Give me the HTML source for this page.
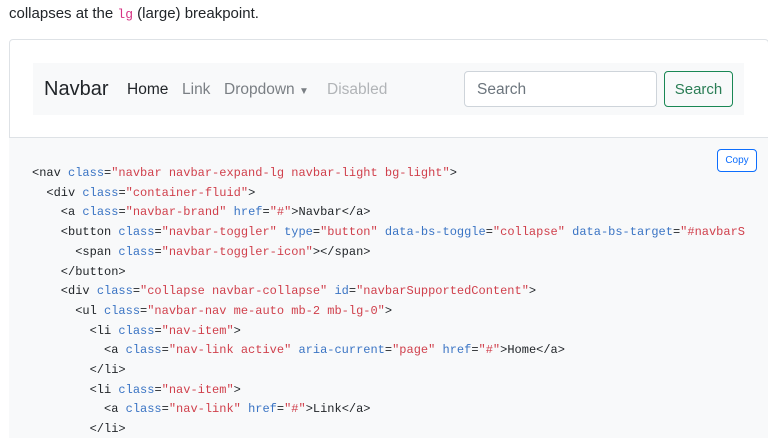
<!DOCTYPE html>
<html><head><style>
body{margin:0;width:768px;height:433px;overflow:hidden;background:#fff;font-family:"Liberation Sans",sans-serif;color:#212529}
.p{position:absolute;left:9px;top:5px;font-size:15px}
.p code{font-family:"Liberation Mono",monospace;color:#d63384;font-size:13px}
.ex{position:absolute;left:9px;top:39px;width:760px;height:99px;border:1px solid #dee2e6;border-radius:4px 4px 0 0;box-sizing:border-box}
.nb{position:absolute;left:23px;top:23px;width:711px;height:52px;background:#f8f9fa}
.brand{position:absolute;left:11px;top:15px;font-size:20px;color:#212529}
.nl{position:absolute;top:18px;font-size:15.5px;color:#7a7f84}
.in{position:absolute;left:431px;top:8px;width:193px;height:36px;border:1px solid #ced4da;border-radius:4px;background:#fff;box-sizing:border-box;font-size:15.5px;color:#6c757d;padding:9px 12px}
.bt{position:absolute;left:631px;top:8px;width:69px;height:36px;border:1px solid #198754;border-radius:4px;box-sizing:border-box;font-size:15px;color:#2a7d55;padding:9px 0;text-align:center}
.code{position:absolute;left:9px;top:138px;width:760px;height:300px;background:#f8f9fa}
pre{position:absolute;left:23px;top:26px;margin:0;font-family:"Liberation Mono",monospace;font-size:12px;line-height:19.7px;color:#212529;white-space:pre}
.a{color:#3a74c4}.s{color:#d0404c}
.cp{position:absolute;left:708px;top:11px;width:40px;height:23px;border:1px solid #0d6efd;border-radius:4px;box-sizing:border-box;font-size:10px;color:#0d6efd;text-align:center;line-height:21px;background:#fff}
</style></head><body>
<div class="p">collapses at the <code>lg</code> (large) breakpoint.</div>
<div class="ex"><div class="nb">
<div class="brand">Navbar</div>
<div class="nl" style="left:94px;color:#212529">Home</div>
<div class="nl" style="left:149px">Link</div>
<div class="nl" style="left:191px">Dropdown <span style="font-size:10px">&#9660;</span></div>
<div class="nl" style="left:294px;color:#b1b4b7">Disabled</div>
<div class="in">Search</div>
<div class="bt">Search</div>
</div></div>
<div class="code"><div class="cp">Copy</div>
<pre>&lt;nav <span class="a">class</span>=<span class="s">"navbar navbar-expand-lg navbar-light bg-light"</span>&gt;
  &lt;div <span class="a">class</span>=<span class="s">"container-fluid"</span>&gt;
    &lt;a <span class="a">class</span>=<span class="s">"navbar-brand"</span> <span class="a">href</span>=<span class="s">"#"</span>&gt;Navbar&lt;/a&gt;
    &lt;button <span class="a">class</span>=<span class="s">"navbar-toggler"</span> <span class="a">type</span>=<span class="s">"button"</span> <span class="a">data-bs-toggle</span>=<span class="s">"collapse"</span> <span class="a">data-bs-target</span>=<span class="s">"#navbarS</span>
      &lt;span <span class="a">class</span>=<span class="s">"navbar-toggler-icon"</span>&gt;&lt;/span&gt;
    &lt;/button&gt;
    &lt;div <span class="a">class</span>=<span class="s">"collapse navbar-collapse"</span> <span class="a">id</span>=<span class="s">"navbarSupportedContent"</span>&gt;
      &lt;ul <span class="a">class</span>=<span class="s">"navbar-nav me-auto mb-2 mb-lg-0"</span>&gt;
        &lt;li <span class="a">class</span>=<span class="s">"nav-item"</span>&gt;
          &lt;a <span class="a">class</span>=<span class="s">"nav-link active"</span> <span class="a">aria-current</span>=<span class="s">"page"</span> <span class="a">href</span>=<span class="s">"#"</span>&gt;Home&lt;/a&gt;
        &lt;/li&gt;
        &lt;li <span class="a">class</span>=<span class="s">"nav-item"</span>&gt;
          &lt;a <span class="a">class</span>=<span class="s">"nav-link"</span> <span class="a">href</span>=<span class="s">"#"</span>&gt;Link&lt;/a&gt;
        &lt;/li&gt;</pre>
</div>
</body></html>
